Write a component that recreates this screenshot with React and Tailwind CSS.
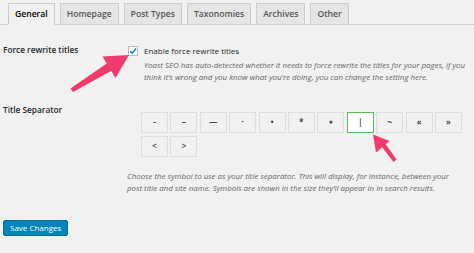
import React from 'react';

const tabs = ['General', 'Homepage', 'Post Types', 'Taxonomies', 'Archives', 'Other'];
const separators = ['-', '–', '—', '·', '•', '*', '⋆', '|', '~', '«', '»', '<', '>'];

const App = () => {
  return (
    <div
      className="relative w-[474px] h-[253px] overflow-hidden bg-[#f1f1f1] text-[#23282d]"
      style={{ fontFamily: '"Open Sans", "Noto Sans", sans-serif' }}
    >
      {/* Tabs */}
      <div className="flex gap-[5px] pl-[8px] pt-[3px] border-b border-[#ccc]">
        {tabs.map((t, i) => (
          <div
            key={t}
            className={`-mb-px h-[22px] px-[6px] flex items-center border border-[#ccc] text-[8.6px] font-semibold ${
              i === 0 ? 'bg-[#f1f1f1] border-b-[#f1f1f1] text-[#000]' : 'bg-[#e5e5e5] text-[#555]'
            }`}
          >
            {t}
          </div>
        ))}
      </div>

      {/* Force rewrite titles */}
      <div className="flex pt-[19px]">
        <div className="w-[126px] pl-[3px] text-[8.3px] font-semibold leading-[12px]">Force rewrite titles</div>
        <div className="flex-1">
          <div className="flex items-center h-[13px] pl-[2px]">
            <span className="w-[10px] h-[10px] border border-[#b4b9be] bg-white flex items-center justify-center">
              <svg width="8" height="8" viewBox="0 0 8 8">
                <path d="M1 4.2 L3.1 6.2 L7 1.4" fill="none" stroke="#1e8cbe" strokeWidth="1.6" />
              </svg>
            </span>
            <span className="ml-[6px] text-[8px]">Enable force rewrite titles</span>
          </div>
          <p className="pl-[18px] mt-[3px] text-[7.9px] italic text-[#666] leading-[11.5px] w-[340px]">
            Yoast SEO has auto-detected whether it needs to force rewrite the titles for your pages, if you think it’s wrong and you know what you’re doing, you can change the setting here.
          </p>
        </div>
      </div>

      {/* Title separator */}
      <div className="flex pt-[21px]">
        <div className="w-[126px] pl-[3px] text-[8.3px] font-semibold leading-[12px]">Title Separator</div>
        <div className="flex-1 pt-[8px]">
          <div className="flex flex-wrap gap-x-[2.4px] gap-y-[3px] pl-[17px] w-[350px]">
            {separators.map((s) => (
              <div
                key={s}
                className={`w-[27px] h-[21px] flex items-center justify-center text-[8.5px] font-semibold border text-[#333] ${
                  s === '|' ? 'bg-white border-[#5cb85c]' : 'bg-[#f1f1f1] border-[#ddd]'
                }`}
              >
                {s}
              </div>
            ))}
          </div>
          <p className="pl-[3px] mt-[13px] text-[7.9px] italic text-[#666] leading-[12px] w-[333px]">
            Choose the symbol to use as your title separator. This will display, for instance, between your post title and site name. Symbols are shown in the size they’ll appear in in search results.
          </p>
        </div>
      </div>

      {/* Save */}
      <div className="pl-[3px] pt-[19px]">
        <button className="h-[16px] px-[6px] rounded-[2px] bg-[#0085ba] border border-[#0073aa] text-white text-[8px] font-medium leading-none">
          Save Changes
        </button>
      </div>

      {/* Arrows overlay */}
      <svg className="absolute inset-0 pointer-events-none" width="474" height="253" viewBox="0 0 474 253">
        <polygon points="70.5,88.5 73,92 112,70.5 107.5,63" fill="#f03a6b" />
        <polygon points="129,55 102.5,56.5 115.5,78" fill="#f03a6b" />
        <polygon points="380.5,145 384.5,142.5 396.5,159.5 393.5,162" fill="#f03a6b" />
        <polygon points="373,134.5 376,152.5 389.5,141" fill="#f03a6b" />
      </svg>
    </div>
  );
};

export default App;
